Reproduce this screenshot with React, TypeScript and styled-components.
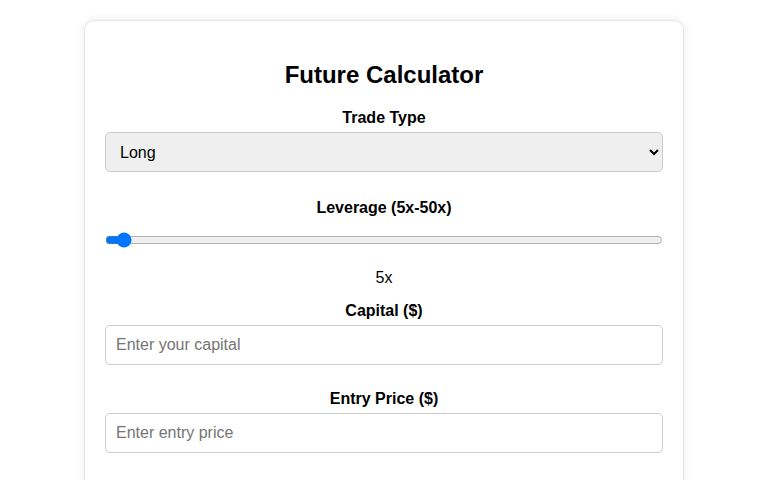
import React, { useState } from 'react'
import styled, { createGlobalStyle } from 'styled-components'

const GlobalStyle = createGlobalStyle`
    html, body {
        margin: 0;
        padding: 0;
        background: #ffffff;
        font-family: 'Liberation Sans', Arial, sans-serif;
        color: #000000;
    }
    * {
        box-sizing: border-box;
    }
`

const Page = styled.div`
    padding: 20px 0;
    display: flex;
    justify-content: center;
`

const Card = styled.div`
    width: 600px;
    padding: 20px 20px 40px;
    background: #ffffff;
    border: 1px solid #e6e6e6;
    border-radius: 10px;
    box-shadow: 0 0 10px rgba(0, 0, 0, 0.08);
`

const Title = styled.h2`
    margin: 20px 0 19px;
    font-size: 24px;
    line-height: 28px;
    font-weight: bold;
    text-align: center;
`

const Label = styled.label<{ $top?: number }>`
    display: block;
    margin-top: ${(p) => p.$top ?? 0}px;
    margin-bottom: 6px;
    padding-top: 1px;
    font-size: 16px;
    line-height: 18px;
    font-weight: bold;
    text-align: center;
`

const Select = styled.select`
    display: block;
    width: 100%;
    height: 40px;
    margin-top: -1px;
    padding: 0 10px;
    font-family: inherit;
    font-size: 16px;
    color: #000000;
    background-color: #efefef;
    border: 1px solid #cccccc;
    border-radius: 5px;
`

const Slider = styled.input`
    display: block;
    width: 100%;
    height: 36px;
    margin: -1px 0 0;
    padding: 10px 0;
`

const SliderValue = styled.div`
    margin-top: 10px;
    padding-top: 1px;
    margin-bottom: -1px;
    font-size: 16px;
    line-height: 18px;
    text-align: center;
`

const TextInput = styled.input`
    display: block;
    width: 100%;
    height: 40px;
    margin-top: -1px;
    padding: 0 10px;
    font-family: inherit;
    font-size: 16px;
    color: #000000;
    border: 1px solid #cccccc;
    border-radius: 5px;
    background: #ffffff;

    &::placeholder {
        color: #757575;
    }
`

export default function App() {
    const [leverage, setLeverage] = useState(5)

    return (
        <>
            <GlobalStyle />
            <Page>
                <Card>
                    <Title>Future Calculator</Title>
                    <Label htmlFor="tradeType">Trade Type</Label>
                    <Select id="tradeType" defaultValue="long">
                        <option value="long">Long</option>
                        <option value="short">Short</option>
                    </Select>
                    <Label $top={26} htmlFor="leverage">Leverage (5x-50x)</Label>
                    <Slider
                        id="leverage"
                        type="range"
                        min={1}
                        max={200}
                        value={leverage}
                        onChange={(e) => setLeverage(Math.min(50, Math.max(5, Number(e.target.value))))}
                    />
                    <SliderValue>{leverage}x</SliderValue>
                    <Label $top={15} htmlFor="capital">Capital ($)</Label>
                    <TextInput id="capital" type="number" placeholder="Enter your capital" />
                    <Label $top={24} htmlFor="entry">Entry Price ($)</Label>
                    <TextInput id="entry" type="number" placeholder="Enter entry price" />
                </Card>
            </Page>
        </>
    )
}
